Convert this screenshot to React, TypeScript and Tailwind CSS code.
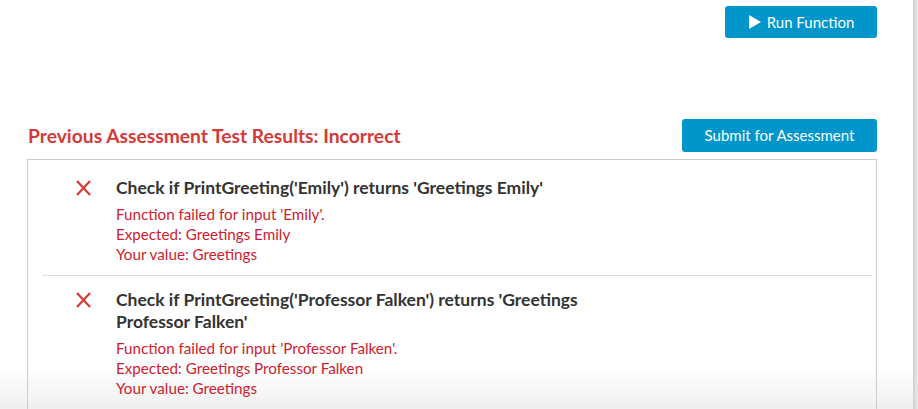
import React from "react";

function XMark() {
  return (
    <svg width="17" height="16" viewBox="0 0 17 16" className="shrink-0">
      <path d="M2 1 L15 15 M15 1 L2 15" stroke="#d43a36" strokeWidth="2.2" fill="none" />
    </svg>
  );
}

type Row = { title: string; lines: string[] };

const rows: Row[] = [
  {
    title: "Check if PrintGreeting('Emily') returns 'Greetings Emily'",
    lines: ["Function failed for input 'Emily'.", "Expected: Greetings Emily", "Your value: Greetings"],
  },
  {
    title: "Check if PrintGreeting('Professor Falken') returns 'Greetings Professor Falken'",
    lines: [
      "Function failed for input 'Professor Falken'.",
      "Expected: Greetings Professor Falken",
      "Your value: Greetings",
    ],
  },
];

export default function App() {
  return (
    <div
      className="relative w-[918px] h-[409px] overflow-hidden bg-white flex"
      style={{ fontFamily: "Lato, 'Noto Sans', sans-serif" }}
    >
      <div className="absolute left-0 right-[5px] bottom-0 h-[40px] bg-gradient-to-b from-[#ffffff] to-[#efefef]" />
      <div className="relative flex-1 pl-[27px] pr-[36px] flex flex-col">
        <div className="flex justify-end pt-[6px]">
          <button className="h-[32px] w-[152px] rounded-[3px] bg-[#0096cc] text-white text-[15px] flex items-center justify-center gap-[6px]">
            <svg width="13" height="14" viewBox="0 0 13 14">
              <path d="M1 0 L13 7 L1 14 Z" fill="white" />
            </svg>
            <span>Run Function</span>
          </button>
        </div>
        <div className="mt-[81px] flex items-center justify-between h-[33px]">
          <div className="text-[19.25px] font-bold text-[#d43a36] pl-[1px] pt-[1px]">
            Previous Assessment Test Results: Incorrect
          </div>
          <button className="h-[33px] w-[195px] rounded-[3px] bg-[#0096cc] text-white text-[15px] flex items-center justify-center">
            Submit for Assessment
          </button>
        </div>
        <div className="mt-[7px] flex-1 border border-b-0 border-[#cccccc] pt-[4px]">
          {rows.map((r, i) => (
            <div
              key={i}
              className={
                "ml-[14px] mr-[4px] flex pl-[33px] pt-[13px] pb-[11px] " +
                (i < rows.length - 1 ? "border-b border-[#dddddd]" : "")
              }
            >
              <div className="pt-[3px] w-[41px]">
                <XMark />
              </div>
              <div className="w-[480px]">
                <div className="text-[17.5px] font-bold text-[#333333] leading-[22px]">{r.title}</div>
                <div className="mt-[5px] text-[15.2px] text-[#d0202e] leading-[20px]">
                  {r.lines.map((l, j) => (
                    <div key={j}>{l}</div>
                  ))}
                </div>
              </div>
            </div>
          ))}
        </div>
      </div>
      <div className="w-[5px] bg-gradient-to-r from-[#cfcfcf] to-[#ececec]" />
    </div>
  );
}
